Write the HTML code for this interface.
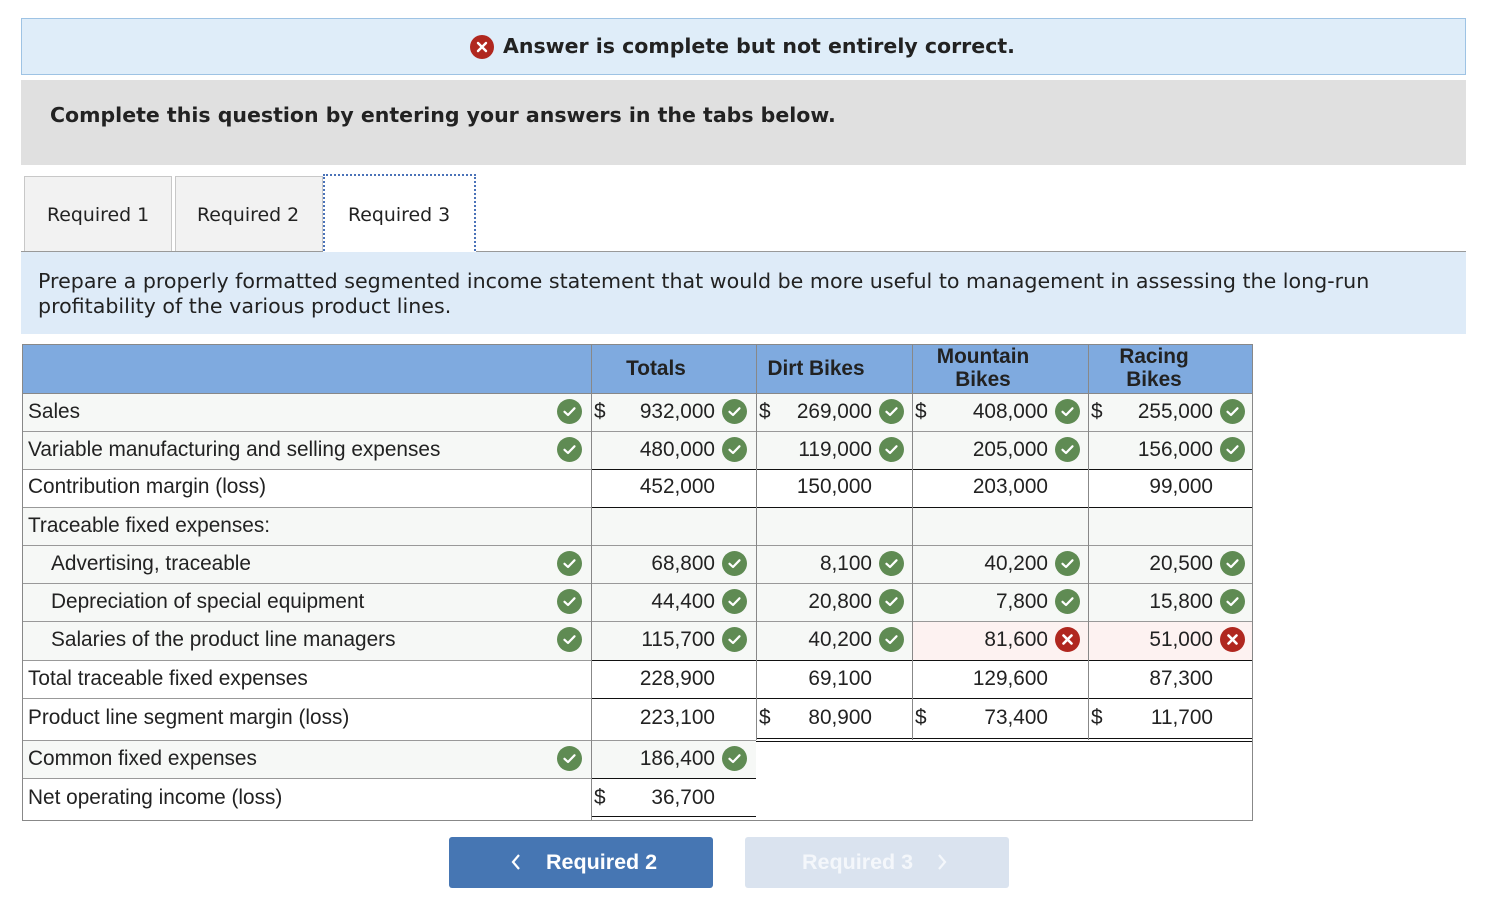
<!DOCTYPE html>
<html><head><meta charset="utf-8"><style>
*{margin:0;padding:0;box-sizing:border-box}
body{width:1492px;height:908px;background:#fff;position:relative;font-family:"Liberation Sans",Arial,sans-serif;color:#222;overflow:hidden}
.a{position:absolute}
.t{position:absolute;font-size:20.8px;line-height:24px;white-space:nowrap}
.r{text-align:right}
.h{position:absolute;height:1px}
.v{position:absolute;width:1px}
.ck{position:absolute;width:25px;height:25px;border-radius:50%;background:#5f8b53}
.ck svg,.x svg{position:absolute;left:0;top:0}
.x{position:absolute;width:25px;height:25px;border-radius:50%;background:#b0271f}
.dv{font-family:"DejaVu Sans",Verdana,sans-serif}
</style></head><body>
<div class="a" style="left:21px;top:18px;width:1445px;height:57px;background:#dfedf9;border:1px solid #9ec3e4"></div>
<div class="x" style="left:470px;top:35px;width:24px;height:24px"><svg width="24" height="24"><path d="M8 8 L16 16 M16 8 L8 16" stroke="#fff" stroke-width="2.4" stroke-linecap="round"/></svg></div>
<div class="t dv" style="left:503px;top:34px;font-weight:bold;font-size:20.5px">Answer is complete but not entirely correct.</div>
<div class="a" style="left:21px;top:80px;width:1445px;height:85px;background:#e0e0e0"></div>
<div class="t dv" style="left:50px;top:103px;font-weight:bold;font-size:20.5px">Complete this question by entering your answers in the tabs below.</div>
<div class="a" style="left:24px;top:176px;width:148px;height:76px;background:#f2f2f2;border:1px solid #c8c8c8;border-bottom:none"></div>
<div class="a" style="left:175px;top:176px;width:148px;height:76px;background:#f2f2f2;border:1px solid #c8c8c8;border-bottom:none"></div>
<div class="a" style="left:323px;top:174px;width:153px;height:80px;background:#fff;border:2px dotted #4a72b8"></div>
<div class="t dv" style="left:47px;top:203px;font-size:18.9px">Required 1</div>
<div class="t dv" style="left:197px;top:203px;font-size:18.9px">Required 2</div>
<div class="t dv" style="left:348px;top:203px;font-size:18.9px">Required 3</div>
<div class="h" style="left:21px;top:251px;width:302px;background:#999"></div>
<div class="h" style="left:476px;top:251px;width:990px;background:#999"></div>
<div class="a" style="left:21px;top:252px;width:1445px;height:82px;background:#deebf8"></div>
<div class="t dv" style="left:38px;top:269px;font-size:20.6px;line-height:25px;white-space:normal;width:1400px">Prepare a properly formatted segmented income statement that would be more useful to management in assessing the long-run profitability of the various product lines.</div>

<div class="a" style="left:22px;top:344px;width:1231px;height:49px;background:#7faadf"></div>
<div class="a" style="left:22px;top:393px;width:1231px;height:76px;background:#f6f8f6"></div>
<div class="a" style="left:22px;top:507px;width:1231px;height:153px;background:#f6f8f6"></div>
<div class="a" style="left:22px;top:740px;width:734px;height:38px;background:#f6f8f6"></div>
<div class="a" style="left:912px;top:621px;width:176px;height:39px;background:#fdf2f1"></div>
<div class="a" style="left:1088px;top:621px;width:165px;height:39px;background:#fdf2f1"></div>

<div class="h" style="left:22px;top:344px;width:1231px;background:#888"></div>
<div class="h" style="left:22px;top:393px;width:1231px;background:#888"></div>
<div class="h" style="left:22px;top:431px;width:1231px;background:#999"></div>
<div class="h" style="left:22px;top:469px;width:569px;background:#999"></div>
<div class="h" style="left:591px;top:469px;width:662px;background:#111"></div>
<div class="h" style="left:22px;top:507px;width:569px;background:#999"></div>
<div class="h" style="left:591px;top:507px;width:662px;background:#111"></div>
<div class="h" style="left:22px;top:545px;width:1231px;background:#999"></div>
<div class="h" style="left:22px;top:583px;width:1231px;background:#999"></div>
<div class="h" style="left:22px;top:621px;width:1231px;background:#999"></div>
<div class="h" style="left:22px;top:660px;width:569px;background:#999"></div>
<div class="h" style="left:591px;top:660px;width:662px;background:#111"></div>
<div class="h" style="left:22px;top:698px;width:569px;background:#999"></div>
<div class="h" style="left:591px;top:698px;width:662px;background:#111"></div>
<div class="h" style="left:22px;top:740px;width:734px;background:#999"></div>
<div class="h" style="left:756px;top:738px;width:497px;background:#111"></div>
<div class="h" style="left:756px;top:741px;width:497px;background:#111"></div>
<div class="h" style="left:22px;top:778px;width:569px;background:#999"></div>
<div class="h" style="left:591px;top:778px;width:165px;background:#111"></div>
<div class="h" style="left:591px;top:816px;width:165px;background:#111"></div>
<div class="h" style="left:22px;top:820px;width:1231px;background:#888"></div>
<div class="v" style="left:22px;top:344px;height:477px;background:#888"></div>
<div class="v" style="left:591px;top:344px;height:477px;background:#888"></div>
<div class="v" style="left:756px;top:344px;height:396px;background:#888"></div>
<div class="v" style="left:912px;top:344px;height:396px;background:#888"></div>
<div class="v" style="left:1088px;top:344px;height:396px;background:#888"></div>
<div class="v" style="left:1252px;top:344px;height:477px;background:#888"></div>

<div class="t" style="left:596px;width:120px;top:357px;text-align:center;font-weight:bold">Totals</div>
<div class="t" style="left:756px;width:120px;top:357px;text-align:center;font-weight:bold">Dirt Bikes</div>
<div class="t" style="left:912px;width:142px;top:345px;text-align:center;font-weight:bold;line-height:23px">Mountain<br>Bikes</div>
<div class="t" style="left:1088px;width:132px;top:345px;text-align:center;font-weight:bold;line-height:23px">Racing<br>Bikes</div>

<div class="t" style="left:28px;top:400px">Sales</div>
<div class="t" style="left:28px;top:438px">Variable manufacturing and selling expenses</div>
<div class="t" style="left:28px;top:475px">Contribution margin (loss)</div>
<div class="t" style="left:28px;top:514px">Traceable fixed expenses:</div>
<div class="t" style="left:51px;top:552px">Advertising, traceable</div>
<div class="t" style="left:51px;top:590px">Depreciation of special equipment</div>
<div class="t" style="left:51px;top:628px">Salaries of the product line managers</div>
<div class="t" style="left:28px;top:667px">Total traceable fixed expenses</div>
<div class="t" style="left:28px;top:706px">Product line segment margin (loss)</div>
<div class="t" style="left:28px;top:747px">Common fixed expenses</div>
<div class="t" style="left:28px;top:786px">Net operating income (loss)</div>

<div class="t" style="left:594px;top:400px">$</div>
<div class="t" style="left:759px;top:400px">$</div>
<div class="t" style="left:915px;top:400px">$</div>
<div class="t" style="left:1091px;top:400px">$</div>
<div class="t" style="left:759px;top:706px">$</div>
<div class="t" style="left:915px;top:706px">$</div>
<div class="t" style="left:1091px;top:706px">$</div>
<div class="t" style="left:594px;top:786px">$</div>

<div class="t r" style="left:600px;width:115px;top:400px">932,000</div>
<div class="t r" style="left:760px;width:112px;top:400px">269,000</div>
<div class="t r" style="left:930px;width:118px;top:400px">408,000</div>
<div class="t r" style="left:1100px;width:113px;top:400px">255,000</div>

<div class="t r" style="left:600px;width:115px;top:438px">480,000</div>
<div class="t r" style="left:760px;width:112px;top:438px">119,000</div>
<div class="t r" style="left:930px;width:118px;top:438px">205,000</div>
<div class="t r" style="left:1100px;width:113px;top:438px">156,000</div>

<div class="t r" style="left:600px;width:115px;top:475px">452,000</div>
<div class="t r" style="left:760px;width:112px;top:475px">150,000</div>
<div class="t r" style="left:930px;width:118px;top:475px">203,000</div>
<div class="t r" style="left:1100px;width:113px;top:475px">99,000</div>

<div class="t r" style="left:600px;width:115px;top:552px">68,800</div>
<div class="t r" style="left:760px;width:112px;top:552px">8,100</div>
<div class="t r" style="left:930px;width:118px;top:552px">40,200</div>
<div class="t r" style="left:1100px;width:113px;top:552px">20,500</div>

<div class="t r" style="left:600px;width:115px;top:590px">44,400</div>
<div class="t r" style="left:760px;width:112px;top:590px">20,800</div>
<div class="t r" style="left:930px;width:118px;top:590px">7,800</div>
<div class="t r" style="left:1100px;width:113px;top:590px">15,800</div>

<div class="t r" style="left:600px;width:115px;top:628px">115,700</div>
<div class="t r" style="left:760px;width:112px;top:628px">40,200</div>
<div class="t r" style="left:930px;width:118px;top:628px">81,600</div>
<div class="t r" style="left:1100px;width:113px;top:628px">51,000</div>

<div class="t r" style="left:600px;width:115px;top:667px">228,900</div>
<div class="t r" style="left:760px;width:112px;top:667px">69,100</div>
<div class="t r" style="left:930px;width:118px;top:667px">129,600</div>
<div class="t r" style="left:1100px;width:113px;top:667px">87,300</div>

<div class="t r" style="left:600px;width:115px;top:706px">223,100</div>
<div class="t r" style="left:760px;width:112px;top:706px">80,900</div>
<div class="t r" style="left:930px;width:118px;top:706px">73,400</div>
<div class="t r" style="left:1100px;width:113px;top:706px">11,700</div>

<div class="t r" style="left:600px;width:115px;top:747px">186,400</div>
<div class="t r" style="left:600px;width:115px;top:786px">36,700</div>

<svg width="0" height="0" style="position:absolute"><defs><symbol id="c" viewBox="0 0 25 25"><path d="M7.5 12.8 L11 16 L17.5 9.3" fill="none" stroke="#fff" stroke-width="2.2" stroke-linecap="round" stroke-linejoin="round"/></symbol><symbol id="xx" viewBox="0 0 25 25"><path d="M8.5 8.5 L16.5 16.5 M16.5 8.5 L8.5 16.5" stroke="#fff" stroke-width="2.6" stroke-linecap="round"/></symbol></defs></svg>
<div class="ck" style="left:557px;top:399px"><svg width="25" height="25"><use href="#c"/></svg></div>
<div class="ck" style="left:722px;top:399px"><svg width="25" height="25"><use href="#c"/></svg></div>
<div class="ck" style="left:879px;top:399px"><svg width="25" height="25"><use href="#c"/></svg></div>
<div class="ck" style="left:1055px;top:399px"><svg width="25" height="25"><use href="#c"/></svg></div>
<div class="ck" style="left:1220px;top:399px"><svg width="25" height="25"><use href="#c"/></svg></div>

<div class="ck" style="left:557px;top:437px"><svg width="25" height="25"><use href="#c"/></svg></div>
<div class="ck" style="left:722px;top:437px"><svg width="25" height="25"><use href="#c"/></svg></div>
<div class="ck" style="left:879px;top:437px"><svg width="25" height="25"><use href="#c"/></svg></div>
<div class="ck" style="left:1055px;top:437px"><svg width="25" height="25"><use href="#c"/></svg></div>
<div class="ck" style="left:1220px;top:437px"><svg width="25" height="25"><use href="#c"/></svg></div>

<div class="ck" style="left:557px;top:551px"><svg width="25" height="25"><use href="#c"/></svg></div>
<div class="ck" style="left:722px;top:551px"><svg width="25" height="25"><use href="#c"/></svg></div>
<div class="ck" style="left:879px;top:551px"><svg width="25" height="25"><use href="#c"/></svg></div>
<div class="ck" style="left:1055px;top:551px"><svg width="25" height="25"><use href="#c"/></svg></div>
<div class="ck" style="left:1220px;top:551px"><svg width="25" height="25"><use href="#c"/></svg></div>

<div class="ck" style="left:557px;top:589px"><svg width="25" height="25"><use href="#c"/></svg></div>
<div class="ck" style="left:722px;top:589px"><svg width="25" height="25"><use href="#c"/></svg></div>
<div class="ck" style="left:879px;top:589px"><svg width="25" height="25"><use href="#c"/></svg></div>
<div class="ck" style="left:1055px;top:589px"><svg width="25" height="25"><use href="#c"/></svg></div>
<div class="ck" style="left:1220px;top:589px"><svg width="25" height="25"><use href="#c"/></svg></div>

<div class="ck" style="left:557px;top:627px"><svg width="25" height="25"><use href="#c"/></svg></div>
<div class="ck" style="left:722px;top:627px"><svg width="25" height="25"><use href="#c"/></svg></div>
<div class="ck" style="left:879px;top:627px"><svg width="25" height="25"><use href="#c"/></svg></div>
<div class="x" style="left:1055px;top:627px"><svg width="25" height="25"><use href="#xx"/></svg></div>
<div class="x" style="left:1220px;top:627px"><svg width="25" height="25"><use href="#xx"/></svg></div>

<div class="ck" style="left:557px;top:746px"><svg width="25" height="25"><use href="#c"/></svg></div>
<div class="ck" style="left:722px;top:746px"><svg width="25" height="25"><use href="#c"/></svg></div>

<div class="a" style="left:449px;top:837px;width:264px;height:51px;background:#4676b3;border-radius:3px"></div>
<svg class="a" style="left:509px;top:852px" width="14" height="20"><path d="M10 3 L4 10 L10 17" fill="none" stroke="#fff" stroke-width="2.2"/></svg>
<div class="t" style="left:546px;top:850px;color:#fff;font-weight:bold;font-size:21.5px">Required 2</div>
<div class="a" style="left:745px;top:837px;width:264px;height:51px;background:#dae3ef;border-radius:3px"></div>
<div class="t" style="left:802px;top:850px;color:#f4f7fb;font-weight:bold;font-size:21.5px">Required 3</div>
<svg class="a" style="left:935px;top:852px" width="14" height="20"><path d="M4 3 L10 10 L4 17" fill="none" stroke="#f4f7fb" stroke-width="2.2"/></svg>
</body></html>
